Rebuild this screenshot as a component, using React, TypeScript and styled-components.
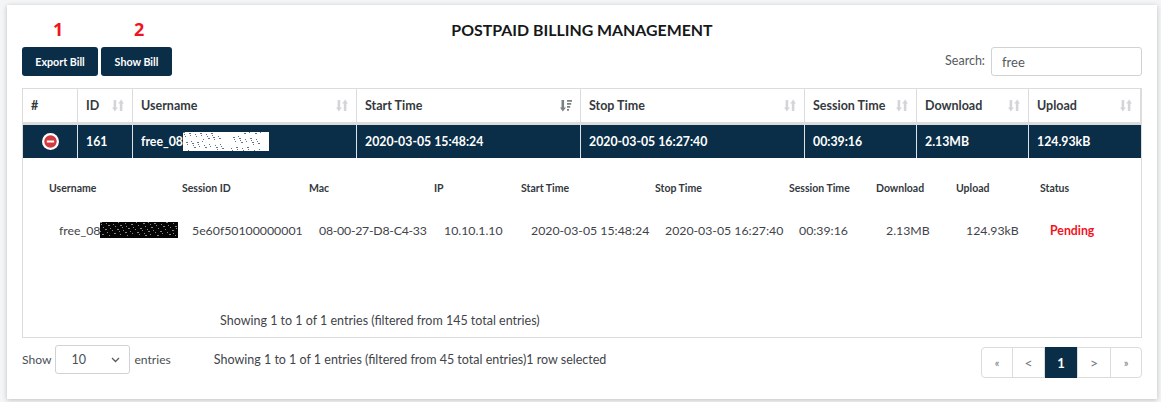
import React from 'react';
import styled, { createGlobalStyle } from 'styled-components';

const NAVY = '#0a2e47';

const GlobalStyle = createGlobalStyle`
  html, body {
    margin: 0;
    background: #f4f5f6;
  }
  body {
    font-family: Lato, "Open Sans", sans-serif;
    color: #3a3f44;
  }
`;

const Page = styled.div`
  width: 1161px;
  height: 402px;
  padding: 5px 4px 3px 7px;
  box-sizing: border-box;
  overflow: hidden;
`;

const Card = styled.div`
  height: 100%;
  box-sizing: border-box;
  background: #fff;
  box-shadow: 0 1px 5px rgba(0, 0, 0, 0.22);
  padding: 0 15px;
  display: flex;
  flex-direction: column;
`;

const TopBar = styled.div`
  height: 83px;
  display: grid;
  grid-template-columns: 1fr auto;
  position: relative;
`;

const Title = styled.h1`
  position: absolute;
  top: 15px;
  left: 0;
  right: 0;
  margin: 0;
  text-align: center;
  font-size: 15.9px;
  line-height: 20px;
  font-weight: 700;
  color: #16181a;
`;

const Buttons = styled.div`
  display: flex;
  gap: 3px;
  align-items: flex-end;
  padding-bottom: 12px;
`;

const ButtonWrap = styled.div`
  position: relative;
`;

const Marker = styled.span<{ $left: number }>`
  position: absolute;
  top: -30px;
  left: ${(p) => p.$left}px;
  color: #f0141e;
  font-family: "Open Sans", sans-serif;
  font-size: 18px;
  line-height: 24px;
  font-weight: 700;
`;

const ActionButton = styled.button<{ $w: number }>`
  width: ${(p) => p.$w}px;
  height: 29px;
  border: 0;
  border-radius: 3px;
  padding: 0;
  background: ${NAVY};
  color: #fff;
  font: 700 10.7px Lato, sans-serif;
`;

const SearchBox = styled.label`
  display: flex;
  align-items: flex-start;
  gap: 6px;
  padding-top: 42px;
  font-size: 12.5px;
  line-height: 28px;
  color: #555b61;
`;

const SearchInput = styled.input`
  width: 151px;
  height: 29px;
  box-sizing: border-box;
  border: 1px solid #cfd3d6;
  border-radius: 3px;
  padding: 0 10px;
  font: 13px Lato, sans-serif;
  color: #555b61;
`;

const TableFrame = styled.div`
  height: 250px;
  box-sizing: border-box;
  border: 1px solid #dcdcdc;
  border-top: 0;
  display: flex;
  flex-direction: column;
`;

const MainGrid = styled.div`
  display: grid;
  grid-template-columns: 55px 55px 224px 224px 224px 112px 112px 1fr;
`;

const HeadCell = styled.div`
  height: 37px;
  box-sizing: border-box;
  border-top: 1px solid #dcdcdc;
  border-right: 1px solid #dcdcdc;
  border-bottom: 3px solid #dcdcdc;
  padding: 0 8px;
  display: flex;
  align-items: center;
  justify-content: space-between;
  font-size: 12.5px;
  font-weight: 700;
  color: #34393e;
  &:last-child {
    border-right: 0;
  }
`;

const RowCell = styled.div<{ $center?: boolean }>`
  height: 33px;
  box-sizing: border-box;
  background: ${NAVY};
  border-right: 1px solid #dfe3e6;
  padding: 0 8px;
  display: flex;
  align-items: center;
  justify-content: ${(p) => (p.$center ? 'center' : 'flex-start')};
  color: #fff;
  font-size: 12.3px;
  font-weight: 700;
  &:last-child {
    border-right: 0;
  }
`;

const DetailPanel = styled.div`
  flex: 1;
  padding: 23px 0 0 26px;
  display: flex;
  flex-direction: column;
`;

const DetailGrid = styled.div`
  display: grid;
  grid-template-columns: 133px 127px 125px 87px 134px 134px 87px 80px 84px 1fr;
  align-items: center;
`;

const DetailHead = styled.div`
  height: 14px;
  font-size: 10.5px;
  line-height: 14px;
  font-weight: 700;
  color: #34393e;
  white-space: nowrap;
`;

const DetailCell = styled.div<{ $status?: boolean; $tight?: boolean }>`
  margin-top: 27px;
  padding-left: 10px;
  height: 16px;
  display: flex;
  align-items: center;
  font-size: 12.3px;
  font-weight: ${(p) => (p.$status ? 700 : 400)};
  letter-spacing: ${(p) => (p.$tight ? '-0.24px' : 'normal')};
  color: ${(p) => (p.$status ? '#f5131e' : '#3f444a')};
  white-space: nowrap;
`;

const Filtered = styled.div`
  margin-top: auto;
  margin-bottom: 8px;
  padding-left: 171px;
  font-size: 12.5px;
  line-height: 16px;
  color: #3f444a;
`;

const Footer = styled.div`
  flex: 1;
  display: flex;
  align-items: flex-start;
  padding-top: 7px;
`;

const LengthBox = styled.div`
  display: flex;
  align-items: center;
  gap: 4px;
  font-size: 12.1px;
  color: #4a4f55;
`;

const LengthSelect = styled.div`
  width: 75px;
  height: 29px;
  box-sizing: border-box;
  border: 1px solid #cfd3d6;
  border-radius: 3px;
  padding: 0 9px 0 15px;
  display: flex;
  align-items: center;
  justify-content: space-between;
  font-size: 12.5px;
  color: #4a4f55;
`;

const Info = styled.div`
  margin-left: 43px;
  line-height: 30px;
  font-size: 12.5px;
  color: #3f444a;
`;

const Pager = styled.div`
  margin-left: auto;
  margin-top: 2px;
  display: flex;
  height: 31px;
  box-sizing: border-box;
  border: 1px solid #dcdcdc;
  border-radius: 4px;
`;

const PageLink = styled.div<{ $active?: boolean; $w: number; $size: number }>`
  width: ${(p) => p.$w}px;
  box-sizing: border-box;
  display: flex;
  align-items: center;
  justify-content: center;
  border-right: 1px solid #dcdcdc;
  background: ${(p) => (p.$active ? NAVY : 'transparent')};
  color: ${(p) => (p.$active ? '#fff' : '#70767c')};
  font-size: ${(p) => p.$size}px;
  font-weight: ${(p) => (p.$active ? 700 : 400)};
  margin: ${(p) => (p.$active ? '-1px 0' : 0)};
  &:last-child {
    border-right: 0;
  }
`;

const Redaction = styled.span<{ $w: number; $h: number; $bg: string }>`
  display: inline-block;
  width: ${(p) => p.$w}px;
  height: ${(p) => p.$h}px;
  background: ${(p) => p.$bg};
  line-height: 0;
  flex: none;
`;

// scribbled out part of the username, speckled like the original
const Speckle = ({ w, h, bg, dot }: { w: number; h: number; bg: string; dot: string }) => {
  const dots = [];
  for (let i = 0; i < 70; i++) {
    const x = (i * 37 + (i % 7) * 11) % w;
    const y = (i * 13 + (i % 5) * 3) % h;
    dots.push(<rect key={i} x={x} y={y} width={i % 3 === 0 ? 2 : 1} height="1" fill={dot} />);
  }
  return (
    <Redaction $w={w} $h={h} $bg={bg}>
      <svg width={w} height={h}>{dots}</svg>
    </Redaction>
  );
};

const SortIcon = ({ active }: { active?: boolean }) =>
  active ? (
    <svg width="12" height="13" viewBox="0 0 12 13" fill="#7c8186" style={{ flex: 'none' }}>
      <path d="M1.5 1h2.6v7.6H6L2.8 12.6 0 8.6h1.5z" />
      <path d="M7 1h5v1.8H7zM7 4h4.2v1.8H7zM7 7h3.2v1.8H7zM7 10h2v1.8H7z" />
    </svg>
  ) : (
    <svg width="12" height="13" viewBox="0 0 12 13" fill="#d3d5d7" style={{ flex: 'none' }}>
      <path d="M1.6 1h2.6v7.6H5.8L2.9 12.6 0 8.6h1.6z" />
      <path d="M7.8 12V4.4H6.2L9.1.4 12 4.4h-1.6V12z" />
    </svg>
  );

const CollapseIcon = () => (
  <svg width="17" height="17" viewBox="0 0 17 17">
    <circle cx="8.5" cy="8.5" r="8.5" fill="#fff" />
    <circle cx="8.5" cy="8.5" r="6.2" fill="#d33a3f" />
    <rect x="4.8" y="7.4" width="7.4" height="2.2" rx="0.5" fill="#fff" />
  </svg>
);

const Chevron = () => (
  <svg width="9" height="6" viewBox="0 0 9 6" fill="none" stroke="#555b61" strokeWidth="1.3">
    <path d="M1 1l3.5 3.5L8 1" />
  </svg>
);

const MAC = '08-00-27-D8-C4-33';

const columns = ['ID', 'Username', 'Start Time', 'Stop Time', 'Session Time', 'Download', 'Upload'];

const detailHeads = ['Username', 'Session ID', 'Mac', 'IP', 'Start Time', 'Stop Time', 'Session Time', 'Download', 'Upload', 'Status'];

const detailValues = ['5e60f50100000001', MAC, '10.10.1.10', '2020-03-05 15:48:24', '2020-03-05 16:27:40', '00:39:16', '2.13MB', '124.93kB'];

const App = () => (
  <Page>
    <GlobalStyle />
    <Card>
      <TopBar>
        <Title>POSTPAID BILLING MANAGEMENT</Title>
        <Buttons>
          <ButtonWrap>
            <Marker $left={31}>1</Marker>
            <ActionButton $w={76}>Export Bill</ActionButton>
          </ButtonWrap>
          <ButtonWrap>
            <Marker $left={33}>2</Marker>
            <ActionButton $w={71}>Show Bill</ActionButton>
          </ButtonWrap>
        </Buttons>
        <SearchBox>
          Search:
          <SearchInput defaultValue="free" />
        </SearchBox>
      </TopBar>
      <TableFrame>
        <MainGrid>
          <HeadCell>#</HeadCell>
          {columns.map((c) => (
            <HeadCell key={c}>
              {c}
              <SortIcon active={c === 'Start Time'} />
            </HeadCell>
          ))}
          <RowCell $center>
            <CollapseIcon />
          </RowCell>
          <RowCell>161</RowCell>
          <RowCell>
            free_08
            <Speckle w={86} h={19} bg="#fff" dot="#5d7488" />
          </RowCell>
          <RowCell>2020-03-05 15:48:24</RowCell>
          <RowCell>2020-03-05 16:27:40</RowCell>
          <RowCell>00:39:16</RowCell>
          <RowCell>2.13MB</RowCell>
          <RowCell>124.93kB</RowCell>
        </MainGrid>
        <DetailPanel>
          <DetailGrid>
            {detailHeads.map((h) => (
              <DetailHead key={h}>{h}</DetailHead>
            ))}
            <DetailCell>
              free_08
              <Speckle w={78} h={16} bg="#050505" dot="#8a8a8a" />
            </DetailCell>
            {detailValues.map((v) => (
              <DetailCell key={v} $tight={v === MAC}>{v}</DetailCell>
            ))}
            <DetailCell $status>Pending</DetailCell>
          </DetailGrid>
          <Filtered>Showing 1 to 1 of 1 entries (filtered from 145 total entries)</Filtered>
        </DetailPanel>
      </TableFrame>
      <Footer>
        <LengthBox>
          Show
          <LengthSelect>
            10
            <Chevron />
          </LengthSelect>
          entries
        </LengthBox>
        <Info>Showing 1 to 1 of 1 entries (filtered from 45 total entries)1 row selected</Info>
        <Pager>
          <PageLink $w={31} $size={11}>«</PageLink>
          <PageLink $w={32} $size={14}>&lt;</PageLink>
          <PageLink $w={33} $size={13} $active>1</PageLink>
          <PageLink $w={33} $size={14}>&gt;</PageLink>
          <PageLink $w={30} $size={11}>»</PageLink>
        </Pager>
      </Footer>
    </Card>
  </Page>
);

export default App;
